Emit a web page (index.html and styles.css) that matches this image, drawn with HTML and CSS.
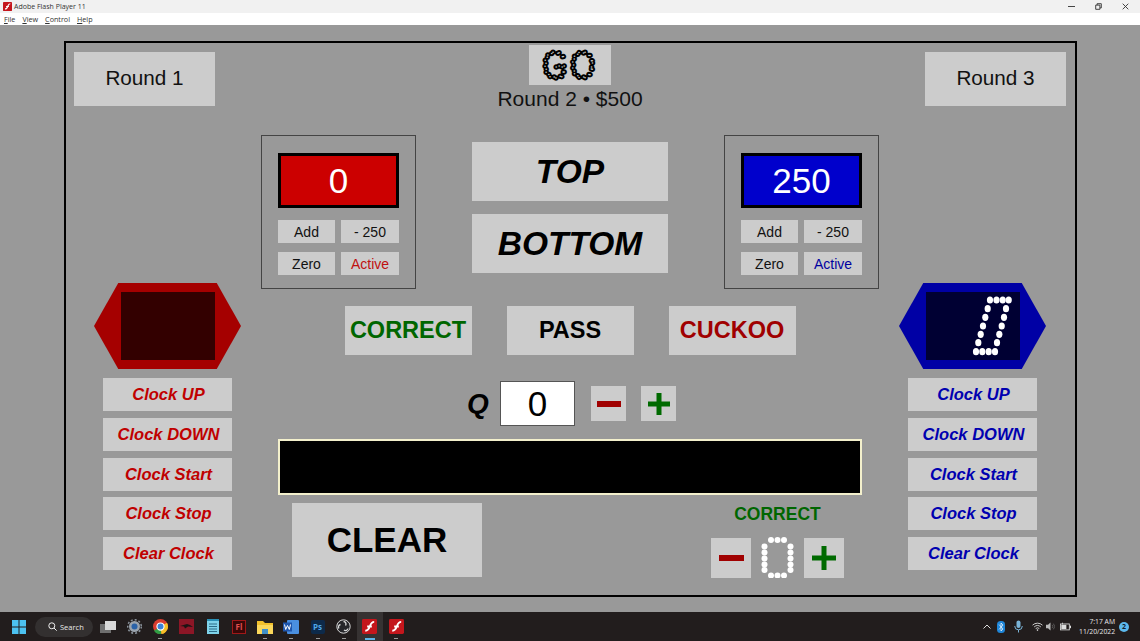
FILE: index.html
```html
<!DOCTYPE html>
<html lang="en">
<head>
    <meta charset="UTF-8">
    <meta name="viewport" content="width=device-width, initial-scale=1.0">
    <title>Adobe Flash Player 11</title>
    <link rel="stylesheet" href="styles.css">
</head>
<body>
    <svg class="defs" width="0" height="0">
        <defs>
            <symbol id="flash" viewBox="0 0 16 16">
                <rect width="16" height="16" rx="1.5" fill="#c4161c"/>
                <path d="M3.5 12.5c3 0 4-2 5-5s2-4.500 4.500-4.500M5.500 8h5" fill="none" stroke="#fff" stroke-width="2"/>
            </symbol>
        </defs>
    </svg>

    <header class="titlebar">
        <svg class="title-icon"><use href="#flash"/></svg>
        <span class="title-text">Adobe Flash Player 11</span>
        <div class="window-controls">
            <svg viewBox="0 0 10 10"><path d="M0 5h10" stroke="#333" stroke-width="1.300"/></svg>
            <svg viewBox="0 0 10 10"><path d="M1 3h6v6h-6zM3 3v-2h6v6h-2" fill="none" stroke="#333" stroke-width="1.300"/></svg>
            <svg viewBox="0 0 10 10"><path d="M1 1l8 8M9 1l-8 8" stroke="#333" stroke-width="1.300"/></svg>
        </div>
    </header>
    <nav class="menubar">
        <span><u>F</u>ile</span>
        <span><u>V</u>iew</span>
        <span><u>C</u>ontrol</span>
        <span><u>H</u>elp</span>
    </nav>

    <main class="stage">
        <div class="frame">
            <div class="top-row">
                <div class="btn round-btn">Round 1</div>
                <div class="top-center">
                    <div class="go-box">
                        <svg class="go-svg" width="82" height="40" viewBox="0 0 82 40">
                            <g class="go-dots">
                                <text id="go-word" x="41" y="33" text-anchor="middle" class="go-text">GO</text>
                            </g>
                            <use href="#go-word" class="go-holes"/>
                        </svg>
                    </div>
                    <div class="round-label">Round 2 • $500</div>
                </div>
                <div class="btn round-btn">Round 3</div>
            </div>

            <div class="board">
                <div class="side">
                    <div class="hex hex-red"><div class="hex-inner"></div></div>
                    <div class="clock-list red">
                        <div class="btn clock-btn">Clock UP</div>
                        <div class="btn clock-btn">Clock DOWN</div>
                        <div class="btn clock-btn">Clock Start</div>
                        <div class="btn clock-btn">Clock Stop</div>
                        <div class="btn clock-btn">Clear Clock</div>
                    </div>
                </div>

                <div class="center">
                    <div class="score-row">
                        <div class="panel">
                            <div class="score score-red">0</div>
                            <div class="panel-btns">
                                <div class="btn small-btn">Add</div>
                                <div class="btn small-btn">- 250</div>
                                <div class="btn small-btn">Zero</div>
                                <div class="btn small-btn red-text">Active</div>
                            </div>
                        </div>
                        <div class="top-bottom">
                            <div class="btn big-btn">TOP</div>
                            <div class="btn big-btn">BOTTOM</div>
                        </div>
                        <div class="panel">
                            <div class="score score-blue">250</div>
                            <div class="panel-btns">
                                <div class="btn small-btn">Add</div>
                                <div class="btn small-btn">- 250</div>
                                <div class="btn small-btn">Zero</div>
                                <div class="btn small-btn blue-text">Active</div>
                            </div>
                        </div>
                    </div>

                    <div class="answer-row">
                        <div class="btn answer-btn green-text">CORRECT</div>
                        <div class="btn answer-btn">PASS</div>
                        <div class="btn answer-btn dark-red-text">CUCKOO</div>
                    </div>

                    <div class="q-row">
                        <span class="q-label">Q</span>
                        <div class="q-value">0</div>
                        <div class="btn step-btn">
                            <svg width="24" height="6"><rect width="24" height="6" fill="#a00000"/></svg>
                        </div>
                        <div class="btn step-btn">
                            <svg width="22" height="22"><path d="M8.500 0h5v8.500h8.500v5h-8.500v8.500h-5v-8.500h-8.500v-5h8.500z" fill="#006a00"/></svg>
                        </div>
                    </div>

                    <div class="question-bar"></div>

                    <div class="bottom-row">
                        <div class="btn clear-btn">CLEAR</div>
                        <div class="correct-box">
                            <div class="correct-label">CORRECT</div>
                            <div class="correct-controls">
                                <div class="btn count-btn">
                                    <svg width="25" height="6"><rect width="25" height="6" fill="#a00000"/></svg>
                                </div>
                                <svg class="led-small" width="33" height="41" viewBox="0 0 33 41">
                                    <title>0</title>
                                    <g fill="#fff">
                                        <circle cx="10" cy="3" r="3"/><circle cx="16.500" cy="3" r="3"/><circle cx="23" cy="3" r="3"/>
                                        <circle cx="3.500" cy="9.500" r="3"/><circle cx="3.500" cy="15.500" r="3"/><circle cx="3.500" cy="21.500" r="3"/><circle cx="3.500" cy="27.500" r="3"/><circle cx="3.500" cy="33" r="3"/>
                                        <circle cx="29.500" cy="9.500" r="3"/><circle cx="29.500" cy="15.500" r="3"/><circle cx="29.500" cy="21.500" r="3"/><circle cx="29.500" cy="27.500" r="3"/><circle cx="29.500" cy="33" r="3"/>
                                        <circle cx="10" cy="38.500" r="3"/><circle cx="16.500" cy="38.500" r="3"/><circle cx="23" cy="38.500" r="3"/>
                                    </g>
                                </svg>
                                <div class="btn count-btn">
                                    <svg width="24" height="24"><path d="M9.500 0h5v9.500h9.500v5h-9.500v9.500h-5v-9.500h-9.500v-5h9.500z" fill="#006a00"/></svg>
                                </div>
                            </div>
                        </div>
                    </div>
                </div>

                <div class="side">
                    <div class="hex hex-blue">
                        <div class="hex-inner">
                            <svg width="93" height="68" viewBox="0 0 93 68">
                                <title>0</title>
                                <g fill="#fff">
                                    <ellipse cx="64" cy="8" rx="3.100" ry="3.600"/><ellipse cx="70.500" cy="8" rx="3.100" ry="3.600"/><ellipse cx="76.700" cy="8" rx="3.100" ry="3.600"/><ellipse cx="82.700" cy="8" rx="3.100" ry="3.600"/>
                                    <ellipse cx="61.700" cy="16.700" rx="3.100" ry="3.600"/><ellipse cx="59.300" cy="25.300" rx="3.100" ry="3.600"/><ellipse cx="57" cy="34" rx="3.100" ry="3.600"/><ellipse cx="54.700" cy="42.300" rx="3.100" ry="3.600"/><ellipse cx="52.300" cy="50.700" rx="3.100" ry="3.600"/>
                                    <ellipse cx="80" cy="16.700" rx="3.100" ry="3.600"/><ellipse cx="78" cy="25.300" rx="3.100" ry="3.600"/><ellipse cx="75.700" cy="34" rx="3.100" ry="3.600"/><ellipse cx="73.300" cy="42.300" rx="3.100" ry="3.600"/><ellipse cx="71" cy="50.700" rx="3.100" ry="3.600"/>
                                    <ellipse cx="50" cy="59.700" rx="3.100" ry="3.600"/><ellipse cx="56.300" cy="59.700" rx="3.100" ry="3.600"/><ellipse cx="62.700" cy="59.700" rx="3.100" ry="3.600"/><ellipse cx="69" cy="59.700" rx="3.100" ry="3.600"/>
                                </g>
                            </svg>
                        </div>
                    </div>
                    <div class="clock-list blue">
                        <div class="btn clock-btn">Clock UP</div>
                        <div class="btn clock-btn">Clock DOWN</div>
                        <div class="btn clock-btn">Clock Start</div>
                        <div class="btn clock-btn">Clock Stop</div>
                        <div class="btn clock-btn">Clear Clock</div>
                    </div>
                </div>
            </div>
        </div>
    </main>

    <footer class="taskbar">
        <svg class="win-logo" width="14" height="14" viewBox="0 0 14 14">
            <g fill="#4cc2f1"><rect width="6.500" height="6.500"/><rect x="7.500" width="6.500" height="6.500"/><rect y="7.500" width="6.500" height="6.500"/><rect x="7.500" y="7.500" width="6.500" height="6.500"/></g>
        </svg>
        <div class="search-pill">
            <svg width="9" height="9" viewBox="0 0 9 9"><circle cx="3.800" cy="3.800" r="3" fill="none" stroke="#eee" stroke-width="1"/><path d="M6 6l2.700 2.700" stroke="#eee" stroke-width="1"/></svg>
            <span>Search</span>
        </div>
        <div class="task-icons">
            <div class="task-slot">
                <svg width="16" height="14" viewBox="0 0 16 14"><rect y="4" width="11" height="9" fill="#6f6f6f"/><rect x="5" y="1" width="11" height="9" fill="#d8d8d8"/></svg>
            </div>
            <div class="task-slot">
                <svg width="15" height="15" viewBox="0 0 15 15"><circle cx="7.500" cy="7.500" r="5.500" fill="#9aa3ad"/><circle cx="7.500" cy="7.500" r="6.800" fill="none" stroke="#8a929b" stroke-width="1.500" stroke-dasharray="2 2"/><circle cx="7.500" cy="7.500" r="3" fill="#2a62a8"/></svg>
            </div>
            <div class="task-slot open">
                <svg width="15" height="15" viewBox="0 0 16 16"><circle cx="8" cy="8" r="8" fill="#d93c30"/><path d="M8 8L1 12.500A8 8 0 0 0 9 16z" fill="#2f9e44"/><path d="M8 8l6.900-4A8 8 0 0 1 9 16z" fill="#f6c026"/><circle cx="8" cy="8" r="3.800" fill="#3b82d8" stroke="#fff" stroke-width="1.200"/></svg>
            </div>
            <div class="task-slot">
                <svg width="15" height="15" viewBox="0 0 15 15"><rect width="15" height="15" fill="#8c1626"/><path d="M1 7l7-2 3 1 3 2-5-.500-3 2-1-2z" fill="#1c1414"/></svg>
            </div>
            <div class="task-slot">
                <svg width="12" height="15" viewBox="0 0 12 15"><rect width="12" height="15" fill="#7fd3ea"/><rect width="12" height="2" fill="#2a8fb4"/><path d="M2 5h8M2 7.500h8M2 10h8M2 12.500h8" stroke="#2c6c88" stroke-width="1"/></svg>
            </div>
            <div class="task-slot">
                <div class="fl-tile">Fl</div>
            </div>
            <div class="task-slot open">
                <svg width="16" height="14" viewBox="0 0 16 14"><path d="M0 1h6l2 2h8v11h-16z" fill="#f2c02c"/><rect y="5" width="16" height="9" fill="#fbd75b"/><rect x="5" y="9" width="6" height="5" fill="#3f8fc9"/></svg>
            </div>
            <div class="task-slot open">
                <svg width="16" height="14" viewBox="0 0 16 14"><rect x="4" width="12" height="14" rx="1" fill="#4a8fe0"/><rect y="2.500" width="9" height="9" fill="#1f56ad"/><path d="M1.500 4.500l1.200 5 1.800-4 1.800 4 1.200-5" fill="none" stroke="#fff" stroke-width="1"/></svg>
            </div>
            <div class="task-slot open">
                <div class="ps-tile">Ps</div>
            </div>
            <div class="task-slot open">
                <svg width="15" height="15" viewBox="0 0 15 15"><circle cx="7.500" cy="7.500" r="6.700" fill="#26262a" stroke="#d8d8d8" stroke-width="1"/><path d="M7.500 2.500a2.500 2.500 0 0 1 2 4M12 9.500a2.500 2.500 0 0 1-4 1.500M3 9.500a2.500 2.500 0 0 1 1.500-4" fill="none" stroke="#d8d8d8" stroke-width="1.300"/></svg>
            </div>
            <div class="task-slot active">
                <svg width="15" height="15"><use href="#flash"/></svg>
            </div>
            <div class="task-slot open">
                <svg width="15" height="15"><use href="#flash"/></svg>
            </div>
        </div>
        <div class="tray">
            <svg class="tray-chevron" width="8" height="5" viewBox="0 0 8 5"><path d="M.5 4.500l3.500-3.500 3.500 3.500" fill="none" stroke="#ddd" stroke-width="1"/></svg>
            <svg class="tray-bt" width="8" height="12" viewBox="0 0 8 12"><rect width="8" height="12" rx="3.500" fill="#1f86d8"/><path d="M2 3.500l4 4.500-2 2v-8l2 2-4 4.500" fill="none" stroke="#fff" stroke-width=".7"/></svg>
            <svg class="tray-mic" width="9" height="13" viewBox="0 0 9 13"><rect x="2.500" y=".5" width="4" height="7.500" rx="2" fill="#7ab4d8"/><path d="M.7 6a3.800 3.800 0 0 0 7.600 0M4.500 10v2.500" fill="none" stroke="#7ab4d8" stroke-width="1"/></svg>
            <svg class="tray-wifi" width="11" height="9" viewBox="0 0 12 10"><path d="M.5 3.500a8 8 0 0 1 11 0M2.300 5.500a5.500 5.500 0 0 1 7.400 0M4 7.300a3 3 0 0 1 4 0" fill="none" stroke="#ddd" stroke-width="1"/><circle cx="6" cy="9" r=".9" fill="#ddd"/></svg>
            <svg class="tray-vol" width="9" height="9" viewBox="0 0 11 10"><path d="M0 3h2.500l3-3v10l-3-3h-2.500z" fill="#bbb"/><path d="M7.500 3a3 3 0 0 1 0 4M9 1.500a5 5 0 0 1 0 7" fill="none" stroke="#777" stroke-width=".8"/></svg>
            <svg class="tray-bat" width="11" height="9" viewBox="0 0 13 9"><rect x=".5" y="1.500" width="10.500" height="7" fill="none" stroke="#ddd" stroke-width="1"/><rect x="1.500" y="2.500" width="6" height="5" fill="#ddd"/><rect x="11.500" y="3.500" width="1.500" height="3" fill="#ddd"/><path d="M3 0v2" stroke="#ddd"/></svg>
            <div class="clock">
                <div>7:17 AM</div>
                <div>11/20/2022</div>
            </div>
            <div class="badge">2</div>
        </div>
    </footer>
</body>
</html>
```

FILE: styles.css
```css
html, body {
    margin: 0;
    height: 641px;
    overflow: hidden;
}
body {
    font-family: 'Liberation Sans', Arial, sans-serif;
    background: #999999;
    color: #000000;
    display: flex;
    flex-direction: column;
}
.defs {
    position: absolute;
}

/* window chrome */
.titlebar {
    height: 13px;
    background: #f1f1f1;
    display: flex;
    align-items: center;
    font-family: 'Open Sans', sans-serif;
    font-size: 7px;
    color: #333333;
}
.title-icon {
    width: 9px;
    height: 9px;
    margin-left: 3px;
    margin-right: 2px;
}
.window-controls {
    margin-left: auto;
    display: flex;
    gap: 20px;
    padding-right: 11px;
}
.window-controls svg {
    width: 7px;
    height: 7px;
}
.menubar {
    height: 12px;
    background: #ffffff;
    display: flex;
    gap: 7px;
    padding-left: 4px;
    padding-bottom: 1px;
    box-sizing: border-box;
    align-items: center;
    font-family: 'Open Sans', sans-serif;
    font-size: 7.200px;
    color: #333333;
}

/* flash stage */
.stage {
    height: 587px;
    background: #999999;
    padding: 16px 0 0 64px;
    box-sizing: border-box;
}
.frame {
    width: 1013px;
    height: 556px;
    box-sizing: border-box;
    border: 2px solid #000000;
}
.btn {
    background: #cccccc;
    display: flex;
    align-items: center;
    justify-content: center;
}
.top-row {
    height: 92px;
    box-sizing: border-box;
    display: flex;
    justify-content: space-between;
    padding: 2px 9px 0 8px;
}
.round-btn {
    width: 141px;
    height: 54px;
    box-sizing: border-box;
    padding-bottom: 2px;
    margin-top: 7px;
    font-size: 20.700px;
    color: #111111;
}
.top-center {
    display: flex;
    flex-direction: column;
    align-items: center;
}
.go-box {
    width: 82px;
    height: 40px;
    background: #cccccc;
}
.go-svg {
    display: block;
    overflow: visible;
}
.go-dots {
    stroke: #000000;
    stroke-width: 5.500;
}
.go-holes {
    stroke: #cccccc;
    stroke-width: 1.500;
}
.go-text {
    font-family: Roboto, sans-serif;
    font-weight: 100;
    font-size: 37px;
    letter-spacing: 3px;
    fill: none;
    stroke-linecap: round;
    stroke-dasharray: 0 6;
}
.round-label {
    font-size: 21px;
    line-height: 26px;
    margin-top: 1px;
    color: #111111;
}
.board {
    display: grid;
    grid-template-columns: 147px 658px 147px;
    padding-left: 28px;
}
.side {
    padding-top: 148px;
    display: flex;
    flex-direction: column;
    align-items: center;
}
.hex {
    width: 147px;
    height: 86px;
    clip-path: polygon(0 50%, 16.500% 0, 83.500% 0, 100% 50%, 83.500% 100%, 16.500% 100%);
    display: flex;
    align-items: center;
    justify-content: center;
}
.hex-red {
    background: #a50000;
}
.hex-red .hex-inner {
    background: #330000;
}
.hex-blue {
    background: #0000a5;
}
.hex-blue .hex-inner {
    background: #000033;
}
.hex-inner {
    width: 94px;
    height: 68px;
}
.hex-inner svg {
    display: block;
}
.clock-list {
    margin-top: 9px;
    display: flex;
    flex-direction: column;
    gap: 6.750px;
}
.clock-btn {
    width: 129px;
    height: 33px;
    box-sizing: border-box;
    padding-left: 2px;
    font-size: 16.500px;
    font-weight: bold;
    font-style: italic;
}
.red {
    color: #c00000;
}
.blue {
    color: #0000b0;
}

/* center column */
.center {
    margin: 0 20px;
}
.score-row {
    display: flex;
    justify-content: space-between;
}
.panel {
    width: 155px;
    height: 154px;
    box-sizing: border-box;
    border: 1px solid #444444;
    padding: 17px 16px 0 16px;
}
.score {
    height: 55px;
    box-sizing: border-box;
    border: 3px solid #000000;
    color: #ffffff;
    font-size: 35px;
    display: flex;
    align-items: center;
    justify-content: center;
}
.score-red {
    background: #cc0000;
}
.score-blue {
    background: #0000cc;
}
.panel-btns {
    margin-top: 12px;
    display: grid;
    grid-template-columns: 57px 58px;
    column-gap: 6px;
    row-gap: 9px;
}
.small-btn {
    height: 23px;
    font-size: 14px;
    color: #111111;
}
.red-text {
    color: #c01010;
}
.blue-text {
    color: #0000a0;
}
.top-bottom {
    margin-top: 7px;
    display: flex;
    flex-direction: column;
    gap: 13px;
}
.big-btn {
    width: 196px;
    height: 59px;
    font-size: 33.500px;
    font-weight: bold;
    font-style: italic;
}
.answer-row {
    margin-top: 17px;
    display: flex;
    justify-content: center;
    gap: 35px;
}
.answer-btn {
    width: 127px;
    height: 49px;
    font-size: 23.500px;
    font-weight: bold;
}
.green-text {
    color: #006600;
}
.dark-red-text {
    color: #a00000;
}
.q-row {
    margin-top: 26px;
    padding-left: 206px;
    display: flex;
    align-items: center;
}
.q-label {
    font-size: 28px;
    font-weight: bold;
    font-style: italic;
    width: 33px;
}
.q-value {
    width: 75px;
    height: 45px;
    box-sizing: border-box;
    border: 1px solid #555555;
    background: #ffffff;
    font-size: 35px;
    display: flex;
    align-items: center;
    justify-content: center;
    margin-right: 16px;
}
.step-btn {
    width: 35px;
    height: 35px;
    margin-right: 15px;
}
.question-bar {
    margin: 13px 0 0 17px;
    width: 584px;
    height: 56px;
    box-sizing: border-box;
    background: #000000;
    border: 2px solid #f3f0cc;
}
.bottom-row {
    margin-top: 8px;
    padding-left: 31px;
    display: flex;
}
.clear-btn {
    width: 190px;
    height: 74px;
    font-size: 35px;
    font-weight: bold;
}
.correct-box {
    margin-left: 229px;
    width: 133px;
    display: flex;
    flex-direction: column;
    align-items: center;
    padding-top: 1px;
}
.correct-label {
    color: #006600;
    font-size: 17.500px;
    font-weight: bold;
    line-height: 21px;
}
.correct-controls {
    margin-top: 12px;
    width: 100%;
    display: flex;
    justify-content: space-between;
    align-items: center;
}
.count-btn {
    width: 40px;
    height: 40px;
}
.led-small {
    display: block;
}

/* windows taskbar */
.taskbar {
    height: 29px;
    background: #221d1d;
    display: flex;
    align-items: center;
    font-family: 'Open Sans', sans-serif;
    color: #e8e8e8;
}
.win-logo {
    margin-left: 12px;
    flex: none;
}
.search-pill {
    margin-left: 9px;
    width: 58px;
    height: 20px;
    box-sizing: border-box;
    padding-left: 13px;
    border-radius: 10px;
    background: #333030;
    display: flex;
    align-items: center;
    gap: 3px;
    font-size: 7.500px;
}
.task-icons {
    margin-left: 2px;
    display: flex;
}
.task-slot {
    width: 26.200px;
    height: 29px;
    display: flex;
    align-items: center;
    justify-content: center;
    position: relative;
}
.task-slot.open::after {
    content: "";
    position: absolute;
    bottom: 2px;
    left: 11px;
    width: 4px;
    height: 1.500px;
    background: #9a9a9a;
}
.task-slot.active {
    background: #363232;
}
.task-slot.active::after {
    content: "";
    position: absolute;
    bottom: 1px;
    left: 8px;
    width: 10px;
    height: 2px;
    background: #5cb4e8;
}
.fl-tile {
    width: 14px;
    height: 14px;
    box-sizing: border-box;
    border: 1px solid #a01818;
    background: #3a0808;
    color: #e05050;
    font-size: 8px;
    font-weight: bold;
    display: flex;
    align-items: center;
    justify-content: center;
}
.ps-tile {
    width: 14px;
    height: 14px;
    border-radius: 2px;
    background: #0d2a4a;
    color: #50a8e8;
    font-size: 8px;
    font-weight: bold;
    display: flex;
    align-items: center;
    justify-content: center;
}
.tray {
    margin-left: auto;
    display: flex;
    align-items: center;
}
.tray-bt {
    margin-left: 6px;
}
.tray-mic {
    margin-left: 9px;
}
.tray-wifi {
    margin-left: 9px;
}
.tray-vol {
    margin-left: 3px;
}
.tray-bat {
    margin-left: 5px;
}
.clock {
    margin-left: 8px;
    width: 36px;
    text-align: right;
    font-size: 6.800px;
    line-height: 10px;
}
.badge {
    margin: 0 11px 0 4px;
    width: 10px;
    height: 10px;
    border-radius: 50%;
    background: #5cb8ec;
    color: #10202c;
    font-size: 7px;
    font-weight: bold;
    display: flex;
    align-items: center;
    justify-content: center;
}
```
